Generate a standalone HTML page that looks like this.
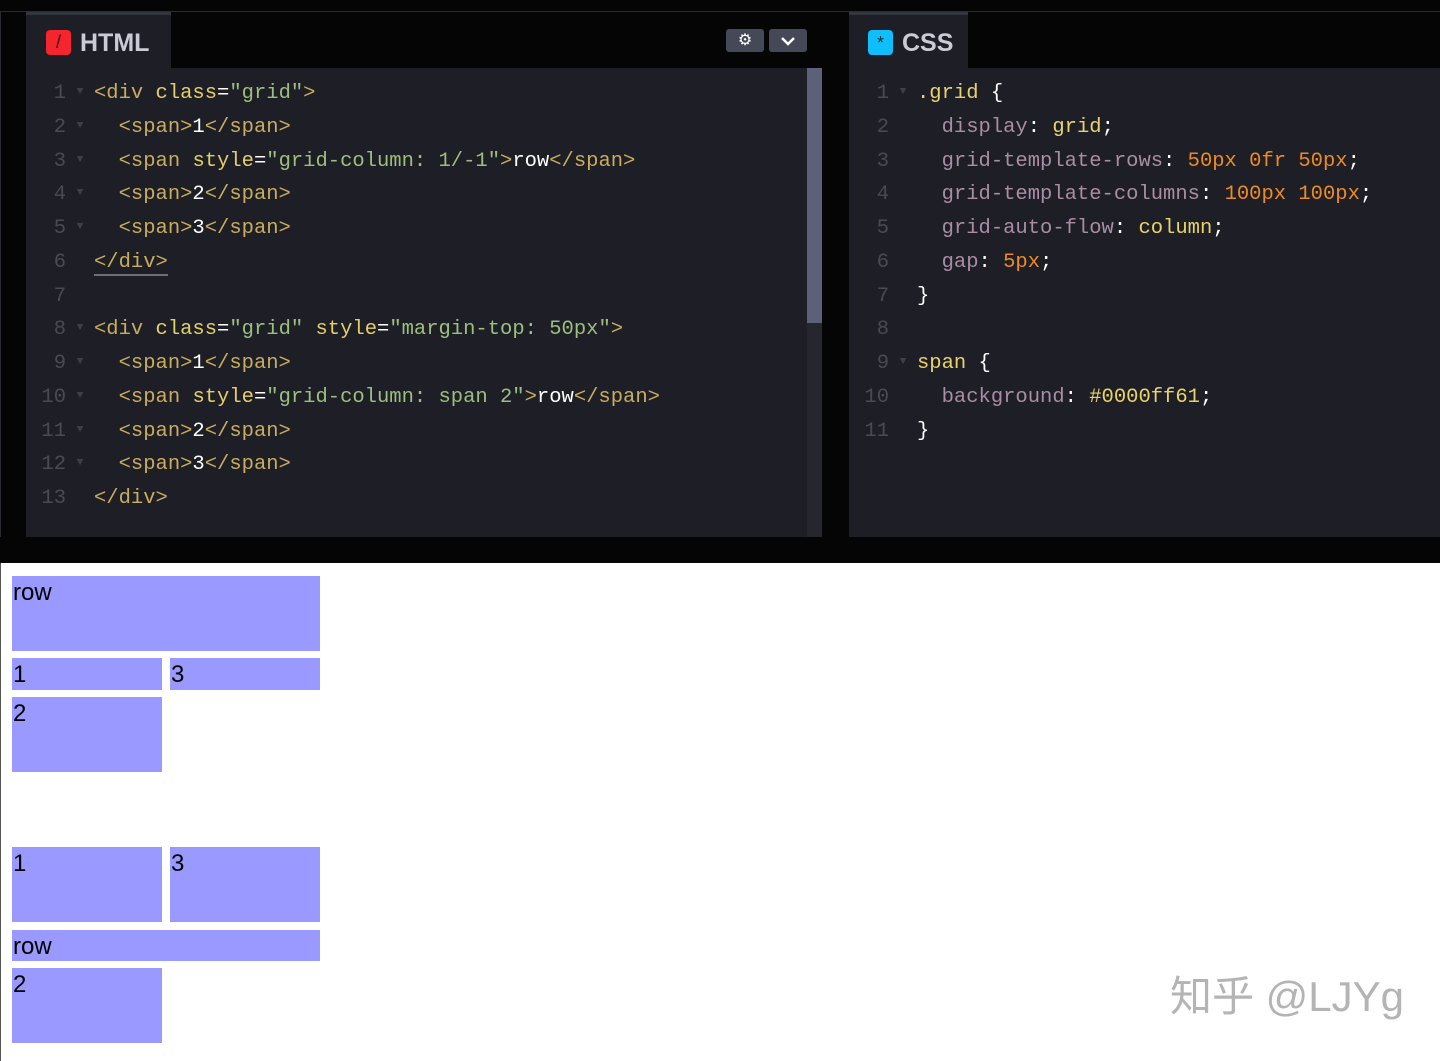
<!DOCTYPE html>
<html><head><meta charset="utf-8"><style>
*{margin:0;padding:0;box-sizing:border-box}
body{width:1440px;height:1061px;background:#fff;position:relative;overflow:hidden;font-family:"Liberation Sans",sans-serif}
.abs{position:absolute}
.code{font-family:"Liberation Mono",monospace;font-size:20.5px;line-height:33.75px;color:#fff}
.code div{height:33.75px;white-space:pre;overflow:visible}
.ln{color:#4a4b52;text-align:right;width:30px;display:inline-block}
.ar{color:#3f4047;font-size:11px;display:inline-block;width:28px;text-align:center;line-height:1;vertical-align:middle}
.t{color:#c9ad5e}.a{color:#e3cf6a}.s{color:#9ebe7e}.p{color:#a98ca5}.v{color:#e8d36a}.n{color:#ee8a24}
.box{position:absolute;background:#9999ff;font-size:24px;color:#000;line-height:34px;padding-left:1px;font-family:"Liberation Sans","DejaVu Sans",sans-serif}
</style></head><body>
<div class="abs" style="left:0;top:0;width:1440px;height:563px;background:#050505"></div>
<div class="abs" style="left:0;top:11px;width:1440px;height:1px;background:#2a2b30"></div>
<div class="abs" style="left:0;top:12px;width:1px;height:525px;background:#2a2b30"></div>
<div class="abs" style="left:26px;top:68px;width:796px;height:469px;background:#1e1f26"></div>
<div class="abs" style="left:26px;top:12px;width:145px;height:56px;background:#1e1f26;border-top:3px solid #34363e"></div>
<div class="abs" style="left:46px;top:30px;width:25px;height:25px;background:#f5252e;border-radius:4px;color:#300;font-size:18px;text-align:center;line-height:25px">/</div>
<div class="abs" style="left:80px;top:27px;font-size:25px;font-weight:bold;color:#c9cbd6;line-height:32px">HTML</div>
<div class="abs" style="left:726px;top:29px;width:38px;height:23px;background:#444857;border-radius:3px;color:#fff;font-size:16px;text-align:center;line-height:23px">⚙</div>
<div class="abs" style="left:769px;top:29px;width:38px;height:23px;background:#444857;border-radius:3px"><svg width="38" height="23"><path d="M13 9l6 6 6-6" stroke="#fff" stroke-width="2.5" fill="none"/></svg></div>
<div class="abs" style="left:807px;top:68px;width:15px;height:469px;background:#26272e"></div>
<div class="abs" style="left:807px;top:68px;width:15px;height:255px;background:#5c6079"></div>
<div class="abs code" style="left:36px;top:77px">
<div><span class="ln">1</span><span class="ar">▼</span><span class="t">&lt;div</span> <span class="a">class</span>=<span class="s">"grid"</span><span class="t">&gt;</span></div>
<div><span class="ln">2</span><span class="ar">▼</span>  <span class="t">&lt;span&gt;</span>1<span class="t">&lt;/span&gt;</span></div>
<div><span class="ln">3</span><span class="ar">▼</span>  <span class="t">&lt;span</span> <span class="a">style</span>=<span class="s">"grid-column: 1/-1"</span><span class="t">&gt;</span>row<span class="t">&lt;/span&gt;</span></div>
<div><span class="ln">4</span><span class="ar">▼</span>  <span class="t">&lt;span&gt;</span>2<span class="t">&lt;/span&gt;</span></div>
<div><span class="ln">5</span><span class="ar">▼</span>  <span class="t">&lt;span&gt;</span>3<span class="t">&lt;/span&gt;</span></div>
<div><span class="ln">6</span><span class="ar"> </span><span class="t" style="border-bottom:2px solid #6b6d78">&lt;/div&gt;</span></div>
<div><span class="ln">7</span></div>
<div><span class="ln">8</span><span class="ar">▼</span><span class="t">&lt;div</span> <span class="a">class</span>=<span class="s">"grid"</span> <span class="a">style</span>=<span class="s">"margin-top: 50px"</span><span class="t">&gt;</span></div>
<div><span class="ln">9</span><span class="ar">▼</span>  <span class="t">&lt;span&gt;</span>1<span class="t">&lt;/span&gt;</span></div>
<div><span class="ln">10</span><span class="ar">▼</span>  <span class="t">&lt;span</span> <span class="a">style</span>=<span class="s">"grid-column: span 2"</span><span class="t">&gt;</span>row<span class="t">&lt;/span&gt;</span></div>
<div><span class="ln">11</span><span class="ar">▼</span>  <span class="t">&lt;span&gt;</span>2<span class="t">&lt;/span&gt;</span></div>
<div><span class="ln">12</span><span class="ar">▼</span>  <span class="t">&lt;span&gt;</span>3<span class="t">&lt;/span&gt;</span></div>
<div><span class="ln">13</span><span class="ar"> </span><span class="t">&lt;/div&gt;</span></div>
</div>
<div class="abs" style="left:849px;top:68px;width:591px;height:469px;background:#1e1f26"></div>
<div class="abs" style="left:849px;top:12px;width:119px;height:56px;background:#1e1f26;border-top:3px solid #34363e"></div>
<div class="abs" style="left:868px;top:30px;width:25px;height:25px;background:#0ebeff;border-radius:4px;color:#033;font-size:18px;text-align:center;line-height:27px">*</div>
<div class="abs" style="left:902px;top:27px;font-size:25px;font-weight:bold;color:#c9cbd6;line-height:32px">CSS</div>
<div class="abs code" style="left:859px;top:77px">
<div><span class="ln">1</span><span class="ar">▼</span><span class="v">.grid</span> {</div>
<div><span class="ln">2</span><span class="ar"> </span>  <span class="p">display</span>: <span class="v">grid</span>;</div>
<div><span class="ln">3</span><span class="ar"> </span>  <span class="p">grid-template-rows</span>: <span class="n">50px 0fr 50px</span>;</div>
<div><span class="ln">4</span><span class="ar"> </span>  <span class="p">grid-template-columns</span>: <span class="n">100px 100px</span>;</div>
<div><span class="ln">5</span><span class="ar"> </span>  <span class="p">grid-auto-flow</span>: <span class="v">column</span>;</div>
<div><span class="ln">6</span><span class="ar"> </span>  <span class="p">gap</span>: <span class="n">5px</span>;</div>
<div><span class="ln">7</span><span class="ar"> </span>}</div>
<div><span class="ln">8</span></div>
<div><span class="ln">9</span><span class="ar">▼</span><span class="v">span</span> {</div>
<div><span class="ln">10</span><span class="ar"> </span>  <span class="p">background</span>: <span class="v">#0000ff61</span>;</div>
<div><span class="ln">11</span><span class="ar"> </span>}</div>
</div>
<div class="abs" style="left:0;top:563px;width:1px;height:498px;background:#555"></div>
<div class="box" style="left:12px;top:576px;width:308px;height:75px">row</div>
<div class="box" style="left:12px;top:658px;width:150px;height:32px">1</div>
<div class="box" style="left:170px;top:658px;width:150px;height:32px">3</div>
<div class="box" style="left:12px;top:697px;width:150px;height:75px">2</div>
<div class="box" style="left:12px;top:847px;width:150px;height:75px">1</div>
<div class="box" style="left:170px;top:847px;width:150px;height:75px">3</div>
<div class="box" style="left:12px;top:930px;width:308px;height:31px;line-height:34px">row</div>
<div class="box" style="left:12px;top:968px;width:150px;height:75px">2</div>
<div class="abs" style="left:1170px;top:973px;font-size:42px;color:#b4b4b4;font-family:'Liberation Sans','Noto Sans CJK SC',sans-serif;line-height:48px">知乎 @LJYg</div>
</body></html>
